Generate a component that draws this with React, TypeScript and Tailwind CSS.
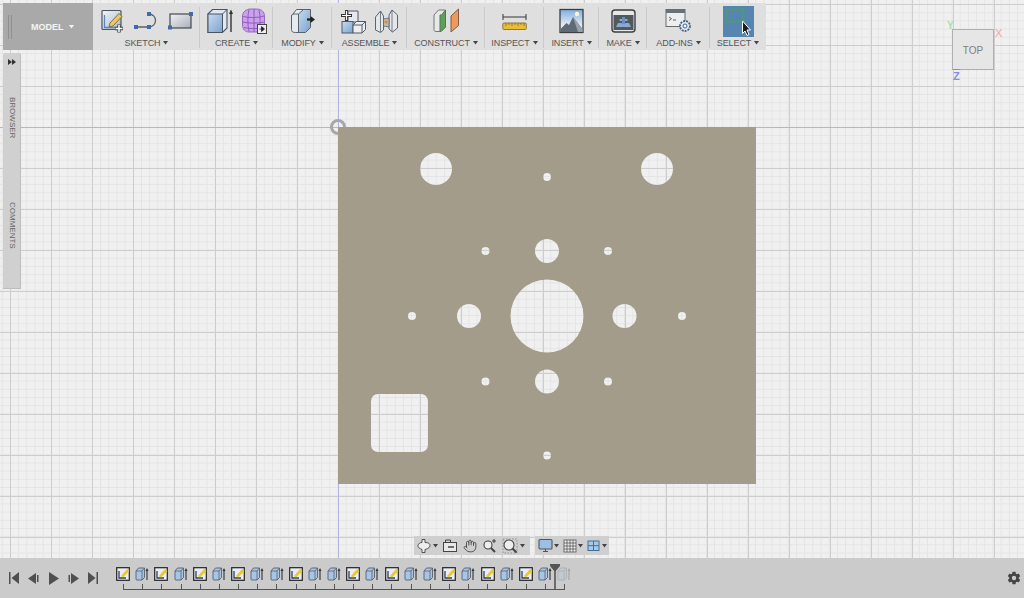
import React from "react";
import { Hand } from "lucide-react";
import { IoSettingsSharp } from "react-icons/io5";

const Caret = () => (
  <svg width="5" height="4" viewBox="0 0 5 4" className="ml-[3px] mb-[2px]">
    <path d="M0 0h5L2.500 3.500z" fill="#444" />
  </svg>
);

const Grad = ({ id, c1 = "#c8dbf0", c2 = "#7aa2d0" }: { id: string; c1?: string; c2?: string }) => (
  <defs>
    <linearGradient id={id} x1="0" y1="0" x2="1" y2="1">
      <stop offset="0" stopColor={c1} />
      <stop offset="1" stopColor={c2} />
    </linearGradient>
  </defs>
);

const SketchNew = () => (
  <svg width="24" height="24" viewBox="0 0 24 24">
    <Grad id="sn" c1="#f4f5f7" c2="#a9b9cf" />
    <rect x="1" y="1.500" width="19" height="19" rx="1" fill="url(#sn)" stroke="#4a5560" strokeWidth="1.200" />
    <path d="M3.500 6v12.500h12" fill="none" stroke="#5a87bb" strokeWidth="1.300" />
    <path d="M9 14l9-9.500 3 3-9 9.500-4 1z" fill="#eec858" stroke="#6d6445" strokeWidth="0.900" />
    <path d="M18 15.500v8M14 19.500h8" stroke="#444" strokeWidth="3.400" />
    <path d="M18 16v7M14.500 19.500h7" stroke="#fff" strokeWidth="1.500" />
  </svg>
);

const LineArc = () => (
  <svg width="25" height="18" viewBox="0 0 25 18">
    <path d="M2 15h13M15 2a6.500 6.500 0 0 1 0 13" fill="none" stroke="#55616c" strokeWidth="1.300" />
    <g fill="#4269a8">
      <rect x="0" y="13" width="4" height="4" />
      <rect x="13" y="0" width="4" height="4" />
      <rect x="13" y="13" width="4" height="4" />
    </g>
  </svg>
);

const RectTool = () => (
  <svg width="25" height="18" viewBox="0 0 25 18">
    <Grad id="rt" c1="#f0f1f3" c2="#aab0b8" />
    <rect x="2" y="2" width="21" height="14" fill="url(#rt)" stroke="#3e4a56" strokeWidth="1.200" />
    <g fill="#4269a8">
      <rect x="0" y="13.500" width="4" height="4" />
      <rect x="21" y="0" width="4" height="4" />
    </g>
  </svg>
);

const Extrude = () => (
  <svg width="26" height="26" viewBox="0 0 26 26">
    <Grad id="ex" />
    <path d="M1 6l4.500-4.500H20v18.500l-4.500 4.500H1z" fill="#dfe8f2" stroke="#4b5560" strokeWidth="1.100" />
    <rect x="1" y="6" width="14.500" height="18.500" fill="url(#ex)" stroke="#4b5560" strokeWidth="1" />
    <path d="M15.500 6L20 1.500" stroke="#4b5560" />
    <path d="M24 24V5" stroke="#333" strokeWidth="1.400" />
    <path d="M22 6L24 1.500 26 6z" fill="#333" />
  </svg>
);

const Mesh = () => (
  <svg width="26" height="26" viewBox="0 0 26 26">
    <path d="M1.500 8c0-4 4-7 8-7h6c5 0 8 3 8 7v9c0 4-3 7-7 7H8c-4 0-6.500-3-6.500-7z" fill="#c8a2ea" stroke="#9a68c2" strokeWidth="1" />
    <path d="M2 8.500c6 1.500 15 1.500 21-.500M1.500 14c7 1.500 15 1.500 22 0M3 19.500c6 1.500 13 1.500 19 0M8 1.500c-1.500 6-1.500 16 0 22M13 1v23M18 2c1.500 6 1.500 15 0 21" fill="none" stroke="#8f52bd" strokeWidth="0.900" />
    <rect x="16.500" y="16.500" width="9" height="9" fill="#eee" stroke="#444" strokeWidth="1" />
    <path d="M18.500 21h3M20.500 18.500l3 2.500-3 2.500z" fill="#222" stroke="#222" strokeWidth="0.800" />
  </svg>
);

const PressPull = () => (
  <svg width="26" height="26" viewBox="0 0 26 26">
    <Grad id="pp" />
    <path d="M1.500 8l5-6.500h14V7" fill="#e9edf2" stroke="#56616c" strokeWidth="1" />
    <path d="M1.500 8c0-2 2-2 4-2h3v18.500h-3c-3 0-4-1-4-3z" fill="#e6eaef" stroke="#56616c" strokeWidth="1" />
    <path d="M8.500 6l5-4.500h7v18l-5 5h-7z" fill="url(#pp)" stroke="#56616c" strokeWidth="1" />
    <path d="M17 11.500h4" stroke="#222" strokeWidth="2.200" />
    <path d="M20.500 8l4.500 3.500-4.500 3.500z" fill="#222" />
  </svg>
);

const NewComp = () => (
  <svg width="26" height="25" viewBox="0 0 26 25">
    <Grad id="nc" />
    <path d="M8 2h10v11H8z" fill="#e7e9ec" stroke="#4e5a66" />
    <rect x="2" y="12.500" width="11" height="11.500" fill="url(#nc)" stroke="#4e5a66" />
    <path d="M13 16l3.500-3.500h9v8l-3.500 3.500h-9z" fill="#eceeef" stroke="#4e5a66" />
    <path d="M13 16h9v8M22 16l3.500-3.500" fill="none" stroke="#4e5a66" />
    <path d="M6.500 1v11M1 6.500h11" stroke="#333" strokeWidth="3" />
    <path d="M6.500 2v9M2 6.500h9" stroke="#fff" strokeWidth="1.200" />
  </svg>
);

const Joint = () => (
  <svg width="25" height="26" viewBox="0 0 25 26">
    <path d="M1.500 22V9l5-6 3 5v14l-3 2.500z" fill="#e4e6e9" stroke="#5a6570" />
    <path d="M23.500 20V7L18 2l-3 5v14l3.500 3z" fill="#e4e6e9" stroke="#5a6570" />
    <path d="M9.500 11l5.500-1v9l-5.500-1z" fill="#c9b9a4" stroke="#5a6570" strokeWidth="0.800" />
    <path d="M6.500 3v21M18 2v22" stroke="#5a6570" strokeWidth="0.800" />
    <circle cx="12" cy="14" r="1.500" fill="#d3893a" />
  </svg>
);

const Construct = () => (
  <svg width="27" height="26" viewBox="0 0 27 26">
    <path d="M1 7l4.500-5h7v17l-4.500 4.500H3c-1.500 0-2-1-2-2z" fill="#e7e8e9" stroke="#777" />
    <path d="M7 7h1.500l4-5v17l-4.500 4.500H7z" fill="#5f9f5c" stroke="#4d7d4b" />
    <path d="M18 8l7.500-7v16.500L18 24z" fill="#ef9a5b" stroke="#7d5d44" />
  </svg>
);

const Ruler = () => (
  <svg width="25" height="22" viewBox="0 0 25 22">
    <path d="M1 7h23" stroke="#444" strokeWidth="1.100" />
    <path d="M1 4v6M24 4v6" stroke="#444" strokeWidth="1.100" />
    <rect x="0.800" y="13" width="23.500" height="6.500" rx="1" fill="#e8bd3a" stroke="#8e7a3f" />
    <path d="M4 13v3M7 13v2M10 13v3M13 13v2M16 13v3M19 13v2M22 13v3" stroke="#6e5d2c" strokeWidth="0.700" />
  </svg>
);

const Picture = () => (
  <svg width="25" height="26" viewBox="0 0 25 26">
    <defs>
      <linearGradient id="sky" x1="0" y1="0" x2="0" y2="1">
        <stop offset="0" stopColor="#82aee0" />
        <stop offset="0.700" stopColor="#e6edf3" />
      </linearGradient>
    </defs>
    <rect x="1" y="1.500" width="23" height="23" fill="url(#sky)" stroke="#3e3e3e" strokeWidth="1.300" />
    <circle cx="18" cy="6" r="2.200" fill="#fbf6d2" />
    <path d="M1.500 21l6-6 2.500 2L14 9l9.500 12v3h-22z" fill="#5e6a76" />
    <path d="M14 9l9.500 12v3H19z" fill="#97a1ab" />
  </svg>
);

const Make = () => (
  <svg width="25" height="26" viewBox="0 0 25 26">
    <rect x="1" y="2" width="23" height="22" rx="3" fill="#e7e7e7" stroke="#3e3e3e" strokeWidth="1.400" />
    <rect x="2.500" y="7" width="20" height="15" fill="#505860" />
    <path d="M5 19l2-4h11l2 4z" fill="#8ba9cb" />
    <path d="M8.500 12h8" stroke="#ddd" strokeWidth="1.200" />
    <path d="M12.500 9v7" stroke="#5f93cf" strokeWidth="3" />
  </svg>
);

const AddIns = () => (
  <svg width="27" height="26" viewBox="0 0 27 26">
    <rect x="1" y="1.500" width="19" height="17" fill="#eceeef" stroke="#6a6a6a" />
    <rect x="1" y="1.500" width="19" height="3.500" fill="#68707a" />
    <path d="M4 9l2.500 1.700L4 12.500M8 12h3" fill="none" stroke="#555" strokeWidth="0.900" />
    <circle cx="20" cy="18" r="5" fill="#dfe8f4" stroke="#48627f" strokeWidth="1.800" strokeDasharray="2 1" />
    <circle cx="20" cy="18" r="2" fill="#fff" stroke="#48627f" strokeWidth="1" />
  </svg>
);

const SelectTool = () => (
  <div className="flex h-[31px] w-[31px] items-start justify-center bg-[#5585b0]">
    <svg width="31" height="31" viewBox="0 0 31 31">
      <rect x="3.500" y="3.500" width="17" height="12" fill="none" stroke="#4f9a70" strokeWidth="2" />
      <path d="M19.500 15v12.500l2.500-2.500 2 4.500 2-1-2-4.500h3.500z" fill="#1c1c1c" stroke="#fff" strokeWidth="1" />
    </svg>
  </div>
);

function Group({ label, w, gap, last, children }: { label: string; w: string; gap?: string; last?: boolean; children: React.ReactNode }) {
  return (
    <div className={`relative flex shrink-0 flex-col items-center ${w}`}>
      {!last && <div className="absolute right-0 top-[4px] h-[41px] w-px bg-[#cbcbcb]" />}
      <div className={`flex h-[36px] items-center ${gap ?? "gap-[8px]"}`}>{children}</div>
      <div className="-mt-[1px] flex items-center text-[9px] leading-[11px] tracking-[-0.100px] text-[#555]">
        {label}
        <Caret />
      </div>
    </div>
  );
}

const TLSketch = () => (
  <svg width="14" height="14" viewBox="0 0 14 14" className="shrink-0">
    <rect x="0.700" y="0.700" width="12.600" height="12.600" fill="#e9eef5" stroke="#222" strokeWidth="1.200" />
    <path d="M3 4v7h7" fill="none" stroke="#32405a" strokeWidth="1.300" />
    <path d="M5 9l6-7 2.500 2L7 10.500z" fill="#eec62d" />
  </svg>
);

const TLExtrude = ({ ghost }: { ghost?: boolean }) => (
  <svg width="14" height="14" viewBox="0 0 14 14" className={`shrink-0 ${ghost ? "opacity-25" : ""}`}>
    <path d="M1 4l2.500-3h6v9.500L7 13H2a1 1 0 0 1-1-1z" fill="#a9c5e4" stroke="#55616e" strokeWidth="0.900" />
    <path d="M1 4h6v9M7 4l2.500-3" fill="none" stroke="#55616e" strokeWidth="0.800" />
    <path d="M12 13V3" stroke="#333" strokeWidth="1.100" />
    <path d="M10.500 4L12 1l1.500 3z" fill="#333" />
  </svg>
);

const steps = "SESESESEESEESESEESESESEG".split("");

const holes = [
  [436, 169, 16], [657, 169, 16], [547, 177, 4], [485.5, 251, 4], [547, 251, 12], [608, 251, 4],
  [412, 316, 4], [469, 316, 12], [547, 316, 36.5], [624.5, 316, 12], [682, 316, 4],
  [485.5, 381.5, 4], [547, 381.5, 12], [608, 381.5, 4], [547, 455.5, 4],
];

const Plate = () => (
  <svg width="418" height="357" viewBox="338 127 418 357" className="absolute left-[338px] top-[127px]">
    <path
      fillRule="evenodd"
      fill="#a39c8a"
      d={
        "M338 127H756V484H338Z M378 394H421a7 7 0 0 1 7 7V445a7 7 0 0 1-7 7H378a7 7 0 0 1-7-7V401a7 7 0 0 1 7-7Z " +
        holes.map(([x, y, r]) => `M${x - r} ${y}a${r} ${r} 0 1 0 ${2 * r} 0a${r} ${r} 0 1 0 ${-2 * r} 0Z`).join(" ")
      }
    />
  </svg>
);

const Tri = ({ className = "" }: { className?: string }) => (
  <svg width="5" height="4" viewBox="0 0 5 4" className={`shrink-0 ${className}`}>
    <path d="M0 0h5L2.500 3.500z" fill="#444" />
  </svg>
);

export default function App() {
  return (
    <div className="flex h-[598px] w-[1024px] flex-col overflow-hidden font-['Liberation_Sans',sans-serif]">
      <div className="relative h-[558px] bg-[#f0f0f0] bg-[linear-gradient(to_right,#cdcdcd_1px,transparent_1px),linear-gradient(to_bottom,#cdcdcd_1px,transparent_1px),linear-gradient(to_right,#e4e4e4_1px,transparent_1px),linear-gradient(to_bottom,#e4e4e4_1px,transparent_1px)] bg-[size:41px_41px,41px_41px,8.200px_8.200px,8.200px_8.200px] bg-[position:10px_4px]">
        <div className="absolute left-0 top-[127px] h-px w-full bg-[#e8a3a3]" />
        <div className="absolute left-[338px] top-0 h-full w-px bg-[#b4b4e2]" />
        <div className="absolute left-[330px] top-[119px] h-[16px] w-[16px] rounded-full border-[3px] border-[#a7a7ab]" />
        <Plate />

        <div className="absolute left-[3px] top-[3px] flex h-[47px] w-[763px] bg-[#dfdfdf]">
          <div className="flex w-[90px] shrink-0 items-center bg-[#a9a9a9] pl-[5px]">
            <div className="h-[24px] w-[4px] border-x border-[#8f8f8f]" />
            <div className="ml-[19px] mt-[2px] flex items-center text-[9px] font-bold text-[#f4f4f4]">
              MODEL
              <svg width="5" height="4" viewBox="0 0 5 4" className="ml-[5px] mb-[2px]"><path d="M0 0h5L2.500 3.500z" fill="#f4f4f4" /></svg>
            </div>
          </div>
          <Group label="SKETCH" w="w-[107px]" gap="gap-[9px]"><SketchNew /><LineArc /><RectTool /></Group>
          <Group label="CREATE" w="w-[73px]"><Extrude /><Mesh /></Group>
          <Group label="MODIFY" w="w-[59px]"><PressPull /></Group>
          <Group label="ASSEMBLE" w="w-[75px]"><NewComp /><Joint /></Group>
          <Group label="CONSTRUCT" w="w-[78px]"><Construct /></Group>
          <Group label="INSPECT" w="w-[59px]"><Ruler /></Group>
          <Group label="INSERT" w="w-[55px]"><Picture /></Group>
          <Group label="MAKE" w="w-[48px]"><Make /></Group>
          <Group label="ADD-INS" w="w-[63px]"><AddIns /></Group>
          <Group label="SELECT" w="w-[56px]" last><SelectTool /></Group>
        </div>

        <div className="absolute left-[3px] top-[53px] flex h-[236px] w-[18px] flex-col items-center rounded-t-[2px] border-r border-b border-[#bdbdbd] bg-[#d0d0d0]">
          <svg width="10" height="6" viewBox="0 0 10 6" className="mt-[6px]"><path d="M1 0l4 3-4 3zM5 0l4 3-4 3z" fill="#333" /></svg>
          <div className="mt-[32px] text-[8px] leading-none text-[#666] [writing-mode:vertical-rl]">BROWSER</div>
          <div className="mt-[64px] text-[8px] leading-none text-[#666] [writing-mode:vertical-rl]">COMMENTS</div>
        </div>

        <div className="absolute left-[952px] top-[29px] flex h-[41px] w-[42px] items-center justify-center border border-[#b0b0b0] bg-[#e6e6e6] pt-[2px] text-[10px] text-[#808080]">TOP</div>
        <div className="absolute left-[995px] top-[28px] text-[11px] leading-none text-[#f3a5a5]">X</div>
        <div className="absolute left-[947px] top-[21px] text-[10px] font-bold leading-none text-[#a8e0a8]">Y</div>
        <div className="absolute left-[953px] top-[71px] text-[11px] font-bold leading-none text-[#8b8be0] overline">Z</div>

        <div className="absolute left-[414px] top-[536px] flex h-[19px] gap-[5px]">
          <div className="flex w-[116px] items-center bg-[#cfcfcf] pl-[2px]">
            <svg width="16" height="16" viewBox="0 0 16 16" className="shrink-0" fill="none" stroke="#444" strokeWidth="0.900">
              <path d="M6 1.500h3v3c3 0 5.500 1 5 3.500s-4 3-5 3.500v3H6v-3c-2-1-4.500-2-4-4s2-3 4-3z" fill="#eee" />
            </svg>
            <Tri className="ml-[1px]" />
            <svg width="14" height="13" viewBox="0 0 14 13" className="ml-[5px] shrink-0" fill="none" stroke="#444">
              <rect x="0.500" y="3.500" width="13" height="9" fill="#e8e8e8" />
              <path d="M2.500 3.500V1h5v2.500" />
              <path d="M5 8h6" strokeWidth="1.500" />
            </svg>
            <Hand size={14} color="#444" strokeWidth={1.500} className="ml-[6px] shrink-0" />
            <svg width="15" height="15" viewBox="0 0 15 15" className="ml-[5px] shrink-0" fill="none" stroke="#444" strokeWidth="1.100">
              <circle cx="6" cy="7" r="4" fill="#eee" />
              <path d="M9 10l4 4" strokeWidth="2" />
              <path d="M12 1v4M10 3h4" />
            </svg>
            <svg width="16" height="16" viewBox="0 0 16 16" className="ml-[5px] shrink-0" fill="none" stroke="#444" strokeWidth="1.100">
              <path d="M1 1h14v14H1z" stroke="#777" strokeWidth="0.700" strokeDasharray="1.500 1.500" />
              <circle cx="7" cy="7" r="5" fill="#eee" />
              <path d="M10.500 10.500l4 4" strokeWidth="2" />
            </svg>
            <Tri className="ml-[2px]" />
          </div>
          <div className="flex w-[74px] items-center bg-[#cfcfcf] pl-[3px]">
            <svg width="15" height="15" viewBox="0 0 15 15" className="shrink-0">
              <rect x="1" y="1.500" width="13" height="9.500" rx="1" fill="#9cc0e4" stroke="#555" strokeWidth="1.100" />
              <path d="M5 13.500h5M7.500 11v2.500" stroke="#555" strokeWidth="1.100" />
            </svg>
            <Tri className="ml-[1px]" />
            <svg width="14" height="14" viewBox="0 0 14 14" className="ml-[4px] shrink-0" fill="#eee" stroke="#555" strokeWidth="0.800">
              <rect x="1" y="1" width="12" height="12" />
              <path d="M4 1v12M7 1v12M10 1v12M1 4h12M1 7h12M1 10h12" fill="none" />
            </svg>
            <Tri className="ml-[1px]" />
            <svg width="13" height="13" viewBox="0 0 13 13" className="ml-[4px] shrink-0" stroke="#3f6f9f" strokeWidth="1">
              <rect x="1" y="2" width="11" height="9.500" fill="#a8c8e8" />
              <path d="M6.500 2v9.500M1 6.700h11" />
            </svg>
            <Tri className="ml-[2px]" />
          </div>
        </div>
      </div>

      <div className="flex h-[40px] items-center bg-[#cbcbcb] pl-[8px] pr-[3px]">
        <div className="flex w-[108px] shrink-0 items-center gap-[9px]">
          <svg width="11" height="12" viewBox="0 0 11 12"><path d="M1 0h1.500v12H1zM11 0v12L3.500 6z" fill="#4f4f4f" /></svg>
          <svg width="11" height="11" viewBox="0 0 11 11"><path d="M8 0v11L0 5.500zM9 2h1.500v7H9z" fill="#4f4f4f" /></svg>
          <svg width="11" height="13" viewBox="0 0 11 13"><path d="M1 0l10 6.500L1 13z" fill="#4f4f4f" /></svg>
          <svg width="11" height="11" viewBox="0 0 11 11"><path d="M3 0v11l8-5.500zM.5 2H2v7H.5z" fill="#4f4f4f" /></svg>
          <svg width="11" height="12" viewBox="0 0 11 12"><path d="M0 0v12l7.500-6zM8.500 0H10v12H8.500z" fill="#4f4f4f" /></svg>
        </div>
        <div className="relative mt-[2px] flex h-[28px] flex-1 flex-col">
          <div className="flex h-[18px] items-center gap-[5.200px]">
            {steps.map((s, i) =>
              s === "S" ? <TLSketch key={i} /> : <TLExtrude key={i} ghost={s === "G"} />
            )}
          </div>
          <div className="ml-[7px] mt-[1px] flex h-[6px] w-[442px] items-end justify-between border-b border-[#555]">
            {steps.map((_, i) => <div key={i} className="h-[5px] w-px bg-[#555]" />)}
          </div>
          <svg width="10" height="26" viewBox="0 0 10 26" className="absolute left-[434px] top-[-1px]">
            <path d="M0 0h10v2L5.800 7v19H4.200V7L0 2z" fill="#555" />
          </svg>
        </div>
        <IoSettingsSharp size={14} color="#444" className="shrink-0" />
      </div>
    </div>
  );
}
